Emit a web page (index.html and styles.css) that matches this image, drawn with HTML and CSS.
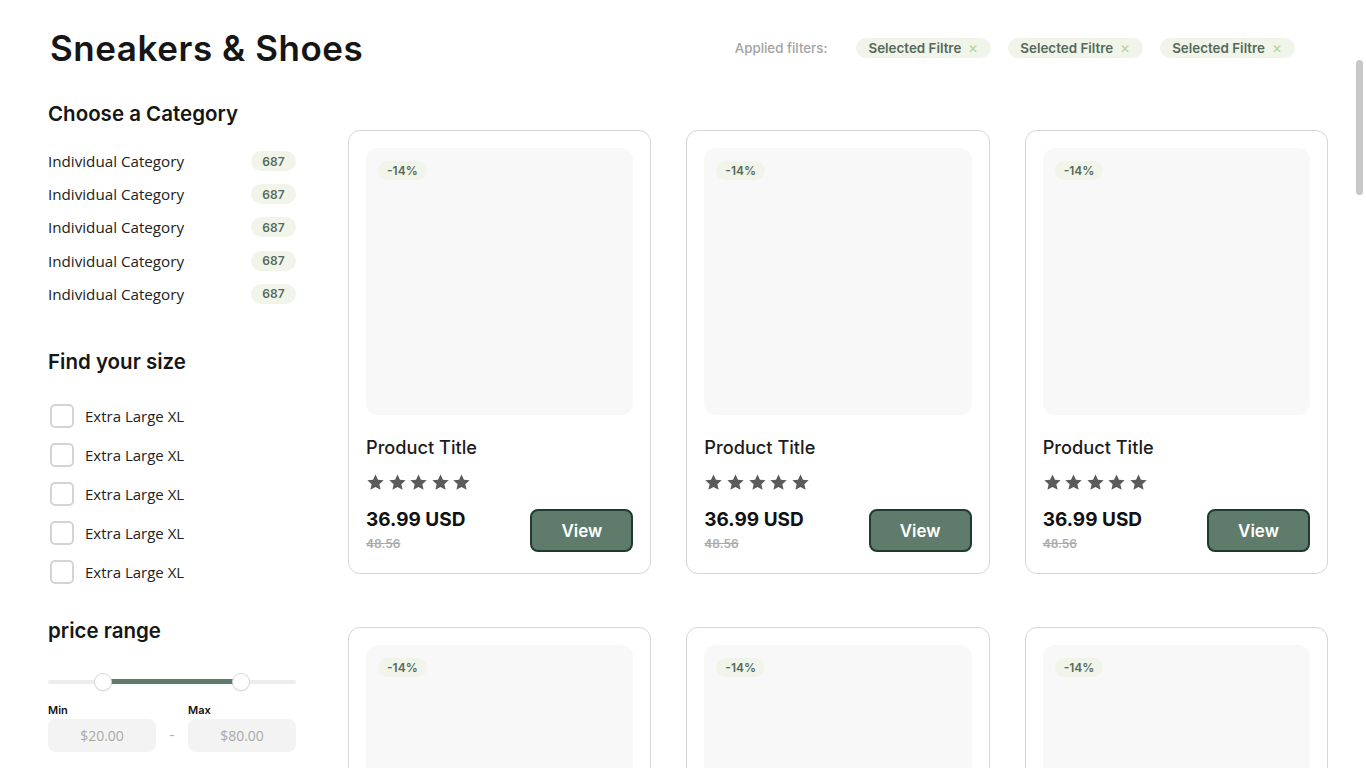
FILE: index.html
```html
<!DOCTYPE html>
<html lang="en">
<head>
<meta charset="utf-8">
<title>Sneakers &amp; Shoes</title>
<link rel="stylesheet" href="styles.css">
</head>
<body>
<div class="page">
  <header class="header">
    <h1 class="title">Sneakers &amp; Shoes</h1>
    <div class="filters">
      <span class="filters-label">Applied filters:</span>
      <span class="chip">Selected Filtre <span class="chip-x">✕</span></span>
      <span class="chip">Selected Filtre <span class="chip-x">✕</span></span>
      <span class="chip">Selected Filtre <span class="chip-x">✕</span></span>
    </div>
  </header>
  <main class="main">
    <aside class="sidebar">
      <h2 class="side-title">Choose a Category</h2>
      <ul class="cat-list">
        <li class="cat"><span>Individual Category</span><span class="count">687</span></li>
        <li class="cat"><span>Individual Category</span><span class="count">687</span></li>
        <li class="cat"><span>Individual Category</span><span class="count">687</span></li>
        <li class="cat"><span>Individual Category</span><span class="count">687</span></li>
        <li class="cat"><span>Individual Category</span><span class="count">687</span></li>
      </ul>
      <h2 class="side-title size-title">Find your size</h2>
      <ul class="size-list">
        <li class="size"><span class="box"></span>Extra Large XL</li>
        <li class="size"><span class="box"></span>Extra Large XL</li>
        <li class="size"><span class="box"></span>Extra Large XL</li>
        <li class="size"><span class="box"></span>Extra Large XL</li>
        <li class="size"><span class="box"></span>Extra Large XL</li>
      </ul>
      <h2 class="side-title price-title">price range</h2>
      <div class="slider">
        <div class="track"></div>
        <div class="range" style="left:55px;width:138px"></div>
        <span class="knob" style="left:47px"></span>
        <span class="knob" style="left:185px"></span>
      </div>
      <div class="minmax">
        <div class="field">
          <span class="field-label">Min</span>
          <span class="field-input">$20.00</span>
        </div>
        <span class="dash">-</span>
        <div class="field">
          <span class="field-label">Max</span>
          <span class="field-input">$80.00</span>
        </div>
      </div>
    </aside>
    <section class="grid" id="grid">
    </section>
  </main>
</div>
<div class="scroll-thumb"></div>
<template id="card-tpl">
  <article class="card">
    <div class="thumb"><span class="discount">-14%</span></div>
    <h3 class="p-title">Product Title</h3>
    <div class="stars">
      <svg viewBox="0 0 24 24"><path d="M12 1.8l3.1 6.6 7.2.8-5.4 4.9 1.5 7.1L12 17.6l-6.4 3.6 1.5-7.1L1.7 9.2l7.2-.8z"/></svg>
      <svg viewBox="0 0 24 24"><path d="M12 1.8l3.1 6.6 7.2.8-5.4 4.9 1.5 7.1L12 17.6l-6.4 3.6 1.5-7.1L1.7 9.2l7.2-.8z"/></svg>
      <svg viewBox="0 0 24 24"><path d="M12 1.8l3.1 6.6 7.2.8-5.4 4.9 1.5 7.1L12 17.6l-6.4 3.6 1.5-7.1L1.7 9.2l7.2-.8z"/></svg>
      <svg viewBox="0 0 24 24"><path d="M12 1.8l3.1 6.6 7.2.8-5.4 4.9 1.5 7.1L12 17.6l-6.4 3.6 1.5-7.1L1.7 9.2l7.2-.8z"/></svg>
      <svg viewBox="0 0 24 24"><path d="M12 1.8l3.1 6.6 7.2.8-5.4 4.9 1.5 7.1L12 17.6l-6.4 3.6 1.5-7.1L1.7 9.2l7.2-.8z"/></svg>
    </div>
    <div class="buy">
      <div class="prices">
        <span class="price">36.99 USD</span>
        <span class="old">48.56</span>
      </div>
      <button class="view">View</button>
    </div>
  </article>
</template>
<script src="script.js"></script>
</body>
</html>
```

FILE: script.js
```js
var grid = document.getElementById('grid');
var tpl = document.getElementById('card-tpl');
for (var i = 0; i < 6; i++) {
  grid.appendChild(tpl.content.cloneNode(true));
}
```

FILE: styles.css
```css
html, body {
  margin: 0;
  padding: 0;
  background: #fff;
}
body {
  font-family: "Open Sans", "Liberation Sans", sans-serif;
  color: #222;
}
.page {
  padding: 0 38px 60px 48px;
}
.scroll-thumb {
  position: fixed;
  right: 3px;
  top: 60px;
  width: 7px;
  height: 135px;
  border-radius: 4px;
  background: #c8c8c8;
}
.header {
  height: 96px;
  display: flex;
  align-items: center;
  justify-content: space-between;
  padding-right: 33px;
}
.title {
  margin: 0 0 0 2px;
  font-family: "Inter", sans-serif;
  font-weight: 600;
  font-size: 35px;
  letter-spacing: 0.55px;
  color: #161616;
}
.filters {
  display: flex;
  align-items: center;
  gap: 17px;
}
.filters-label {
  font-family: "Inter", sans-serif;
  font-size: 13.3px;
  font-weight: 500;
  color: #a3a3a3;
  margin-right: 12px;
}
.chip {
  display: inline-flex;
  align-items: center;
  height: 20px;
  padding: 0 13px 0 12px;
  border-radius: 10px;
  background: #f1f5e9;
  font-family: "Inter", sans-serif;
  font-size: 13.4px;
  font-weight: 600;
  color: #566a5c;
}
.chip-x {
  margin-left: 7px;
  font-size: 12px;
  color: #a6d49c;
  font-weight: 400;
}
.main {
  display: flex;
  gap: 52px;
  align-items: flex-start;
}
.sidebar {
  width: 248px;
  flex: none;
  padding-top: 4px;
}
.side-title {
  margin: 0;
  font-family: "Inter", sans-serif;
  font-weight: 600;
  font-size: 20.5px;
  line-height: 28px;
  color: #161616;
}
.cat-list, .size-list {
  list-style: none;
  margin: 0;
  padding: 0;
}
.cat-list {
  margin-top: 23px;
  display: flex;
  flex-direction: column;
  gap: 13.2px;
}
.cat {
  display: flex;
  justify-content: space-between;
  align-items: center;
  height: 20px;
  font-size: 15.2px;
  color: #222;
}
.count {
  width: 45px;
  height: 20px;
  border-radius: 10px;
  background: #f1f5e9;
  display: flex;
  align-items: center;
  justify-content: center;
  font-family: "Inter", sans-serif;
  font-size: 12px;
  font-weight: 600;
  color: #566a5c;
}
.size-title {
  margin-top: 44px;
}
.size-list {
  margin-top: 28px;
  display: flex;
  flex-direction: column;
  gap: 15px;
}
.size {
  display: flex;
  align-items: center;
  height: 24px;
  font-size: 15px;
  color: #222;
}
.box {
  width: 20px;
  height: 20px;
  margin-left: 2px;
  margin-right: 11px;
  border: 2px solid #d4d4d4;
  border-radius: 5px;
}
.price-title {
  margin-top: 33px;
}
.slider {
  position: relative;
  height: 16px;
  margin-top: 29px;
}
.track {
  position: absolute;
  left: 0;
  right: 0;
  top: 6px;
  height: 4px;
  border-radius: 2px;
  background: #ececec;
}
.range {
  position: absolute;
  top: 5.5px;
  height: 5px;
  background: #5e7b6b;
}
.knob {
  position: absolute;
  top: 0;
  width: 16px;
  height: 16px;
  border-radius: 50%;
  background: #fff;
  box-shadow: 0 0 0 1px #d6d6d6, 0 1px 2px rgba(0,0,0,0.15);
}
.minmax {
  margin-top: 13px;
  display: flex;
  align-items: flex-end;
  justify-content: space-between;
}
.field {
  display: flex;
  flex-direction: column;
  gap: 2px;
}
.field-label {
  font-family: "Inter", sans-serif;
  font-size: 11px;
  line-height: 14px;
  font-weight: 600;
  color: #111;
}
.field-input {
  width: 108px;
  height: 33px;
  border-radius: 8px;
  background: #f3f3f3;
  display: flex;
  align-items: center;
  justify-content: center;
  font-size: 14px;
  color: #a9a9a9;
}
.dash {
  height: 33px;
  line-height: 31px;
  color: #a9a9a9;
  font-size: 15px;
}
.grid {
  flex: 1;
  margin-top: 34px;
  display: grid;
  grid-template-columns: repeat(3, 1fr);
  column-gap: 35px;
  row-gap: 53px;
}
.card {
  border: 1px solid #d6d6d6;
  border-radius: 12px;
  padding: 17px 17px 21px;
}
.thumb {
  position: relative;
  aspect-ratio: 1 / 1;
  background: #f8f8f8;
  border-radius: 12px;
}
.discount {
  position: absolute;
  left: 12px;
  top: 13px;
  height: 19px;
  padding: 0 9px;
  border-radius: 10px;
  background: #f1f5e9;
  font-family: "Inter", sans-serif;
  font-size: 12px;
  font-weight: 600;
  line-height: 19px;
  color: #566a5c;
}
.p-title {
  margin: 20px 0 0;
  font-family: "Inter", sans-serif;
  font-weight: 500;
  font-size: 18.2px;
  line-height: 24px;
  color: #1c1c1c;
}
.stars {
  margin-top: 14px;
  display: flex;
  gap: 2.6px;
  height: 19px;
}
.stars svg {
  width: 19px;
  height: 19px;
  fill: #5b5b5b;
}
.buy {
  margin-top: 16px;
  display: flex;
  justify-content: space-between;
  align-items: flex-end;
}
.prices {
  display: flex;
  flex-direction: column;
  gap: 4px;
}
.price {
  font-family: "Inter", sans-serif;
  font-weight: 700;
  font-size: 19px;
  line-height: 24px;
  color: #111;
}
.old {
  font-family: "Inter", sans-serif;
  font-weight: 600;
  font-size: 12px;
  line-height: 16px;
  color: #ababab;
  text-decoration: line-through;
}
.view {
  width: 103px;
  height: 43px;
  border: 2px solid #1f3b2d;
  border-radius: 8px;
  background: #5e7b6b;
  color: #fff;
  font-family: "Inter", sans-serif;
  font-weight: 600;
  font-size: 17px;
  padding: 0;
}
```
